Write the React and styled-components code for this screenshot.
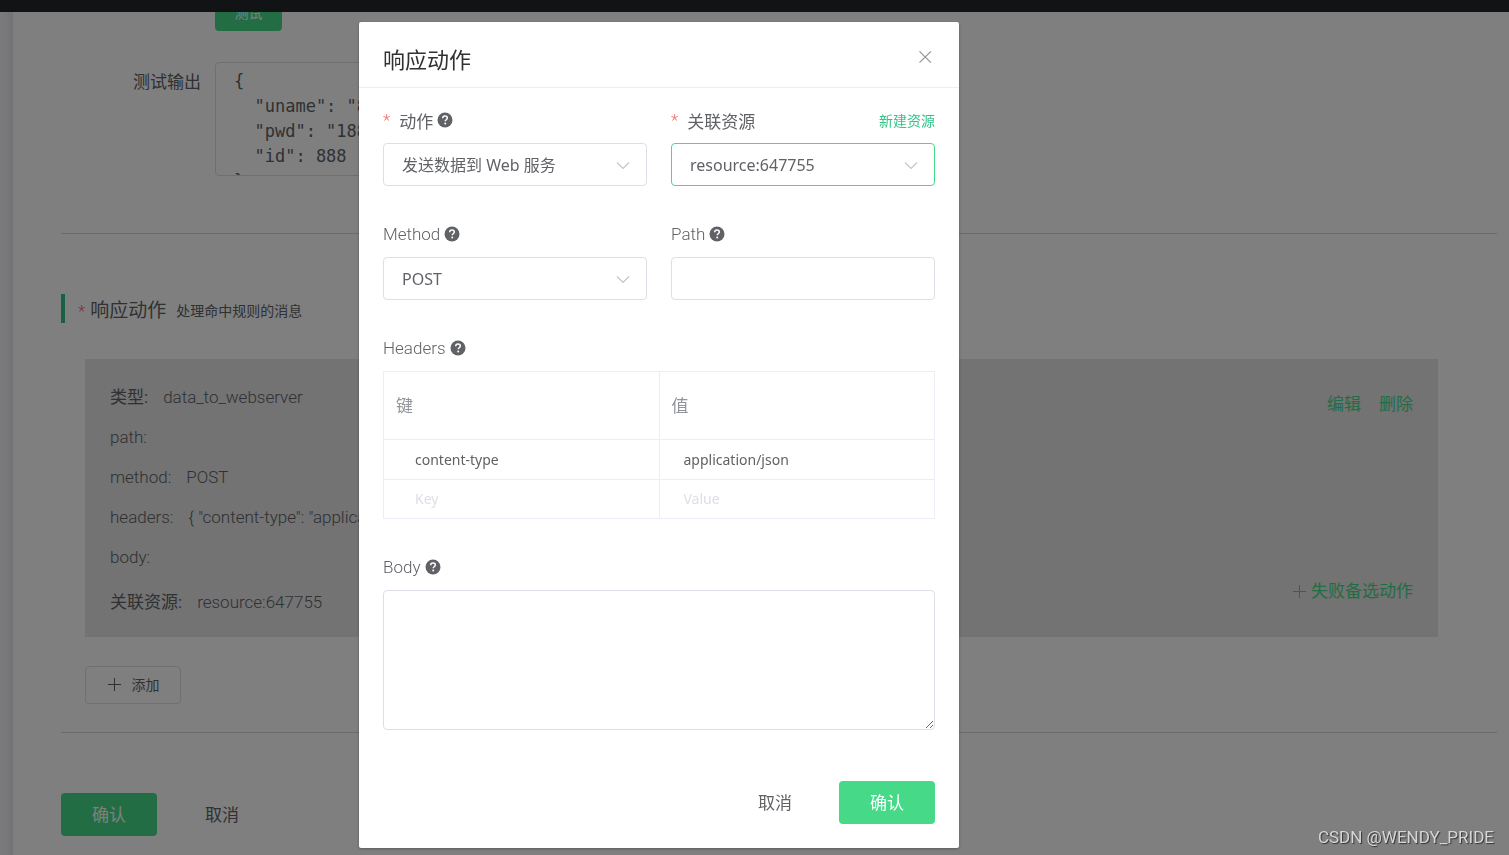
import React from "react";
import styled, { createGlobalStyle, css } from "styled-components";

const labelFont = `Roboto, "Noto Sans CJK SC", sans-serif`;
const controlFont = `"Noto Sans", "Noto Sans CJK SC", sans-serif`;

const GlobalStyle = createGlobalStyle`
  *, *::before, *::after { box-sizing: border-box; }
  body {
    margin: 0;
    background: #f4f4f8;
    color: #606266;
    font-family: ${labelFont};
    font-size: 17px;
    font-weight: 300;
    overflow: hidden;
  }
  button, input, select, textarea { font: inherit; color: inherit; }
`;

/* ---------- page behind the dialog ---------- */

const Page = styled.div`
  display: flex;
  flex-direction: column;
  height: 100vh;
`;

const TopBar = styled.header`
  flex: none;
  height: 12px;
  background: #242629;
`;

const Workspace = styled.div`
  flex: 1;
  min-height: 0;
  padding-left: 13px;
  overflow: hidden;
`;

const Content = styled.main`
  min-height: 100%;
  margin-top: -17px;
  padding: 0 12px 36px 48px;
  background: #fff;
  box-shadow: 0 0 12px rgba(0, 0, 0, 0.12);
`;

const OutputRow = styled.div`
  display: grid;
  grid-template-columns: 140px 1fr;
  column-gap: 14px;
  padding-top: 31px;
`;

const OutputLabel = styled.span`
  padding-top: 8px;
  line-height: 25px;
  text-align: right;
  font-weight: 400;
`;

const Output = styled.pre`
  height: 114px;
  max-width: 560px;
  margin: 0;
  padding: 6px 18px;
  overflow: hidden;
  border: 1px solid #dcdfe6;
  border-radius: 4px;
  font: 400 17px/25px "DejaVu Sans Mono", monospace;
`;

const Divider = styled.hr`
  height: 1px;
  margin: ${(p) => p.$margin};
  border: 0;
  background: #d4d6de;
`;

const SectionTitle = styled.h2`
  display: flex;
  align-items: center;
  gap: 10px;
  height: 29px;
  margin: 0 0 36px;
  padding-left: 13px;
  border-left: 4px solid #34c388;
  font-size: 19px;
  font-weight: 400;

  small { font-size: 14px; padding-top: 2px; }
`;

const Star = styled.span`
  color: #f56c6c;
  font-size: 17px;
  font-weight: 300;
  margin-right: ${(p) => p.$gap}px;
`;

const ActionCard = styled.section`
  display: flex;
  justify-content: space-between;
  margin: 0 59px 29px 24px;
  padding: 18px 25px 10px;
  background: #e6e6e6;
`;

const Facts = styled.dl`
  margin: 0;
`;

const Fact = styled.div`
  display: flex;
  align-items: baseline;
  gap: 15px;
  height: 40px;
  line-height: 40px;

  &:last-child { height: 50px; line-height: 50px; }
  dt { font-weight: ${(p) => (p.$cjk ? 400 : 300)}; }
  dd { margin: 0; white-space: nowrap; }
`;

const CardLinks = styled.div`
  display: flex;
  flex-direction: column;
  justify-content: space-between;
  align-items: flex-end;
  padding: 15px 0 23px;
`;

const LinkGroup = styled.div`
  display: flex;
  gap: 18px;
`;

const TextLink = styled.a`
  display: inline-flex;
  align-items: center;
  gap: 4px;
  color: ${(p) => (p.$small ? "#34c388" : "#46da88")};
  font-size: ${(p) => (p.$small ? 14 : 17)}px;
  font-weight: 400;
  line-height: 25px;
  text-decoration: none;
`;

const buttonKinds = {
  primary: css`
    min-width: 96px;
    height: 43px;
    background: #46da88;
    color: #fff;
  `,
  plain: css`
    height: 43px;
    background: none;
  `,
  outline: css`
    min-width: 96px;
    height: 38px;
    border: 1px solid #dcdfe6;
    background: #fff;
    font-size: 14px;
  `,
  small: css`
    min-width: 67px;
    height: 36px;
    background: #46da88;
    color: #fff;
    font-size: 14px;
  `,
};

const Button = styled.button`
  display: inline-flex;
  align-items: center;
  justify-content: center;
  gap: 10px;
  padding: 0 0 2px;
  border: 0;
  border-radius: 4px;
  font-weight: 400;
  cursor: pointer;
  ${(p) => buttonKinds[p.$kind]}
`;

const AddArea = styled.div`
  display: flex;
  padding-left: 24px;
`;

const TestArea = styled.div`
  display: flex;
  padding-left: 154px;
`;

const PageActions = styled.div`
  display: flex;
  gap: 48px;
`;

/* ---------- dialog ---------- */

const Overlay = styled.div`
  position: fixed;
  inset: 0;
  display: flex;
  justify-content: center;
  align-items: flex-start;
  padding: 22px 191px 0 0;
  overflow: hidden;
  background: rgba(0, 0, 0, 0.5);
`;

const Dialog = styled.section`
  width: 600px;
  border-radius: 2px;
  background: #fff;
  box-shadow: 0 1px 3px rgba(0, 0, 0, 0.3);
`;

const DialogHeader = styled.header`
  display: flex;
  justify-content: space-between;
  align-items: center;
  height: 66px;
  padding: 12px 24px 0;
  border-bottom: 1px solid #ebeef5;
`;

const DialogTitle = styled.h1`
  margin: 0;
  color: #303133;
  font-size: 22px;
  font-weight: 400;
  line-height: 32px;
`;

const CloseButton = styled.button`
  display: grid;
  place-items: center;
  width: 20px;
  height: 20px;
  margin-bottom: 8px;
  padding: 0;
  border: 0;
  background: none;
  color: #909399;
  cursor: pointer;
`;

const Form = styled.form`
  display: grid;
  grid-template-columns: 1fr 1fr;
  gap: 28px 24px;
  padding: 12px 24px 24px;
`;

const Field = styled.div`
  min-width: 0;
  grid-column: ${(p) => (p.$wide ? "1 / -1" : "auto")};
`;

const FieldHead = styled.div`
  display: flex;
  align-items: center;
  height: 43px;
  padding-bottom: 3px;
`;

const FieldLabel = styled.label`
  margin-right: 4px;
  font-weight: ${(p) => (p.$cjk ? 400 : 300)};
`;

const HeadLink = styled(TextLink)`
  margin-left: auto;
  padding-top: 2px;
`;

const box = css`
  display: block;
  width: 100%;
  border: 1px solid ${(p) => (p.$active ? "#46da88" : "#dcdfe6")};
  border-radius: 4px;
  outline: 0;
  background: #fff;
  font-family: ${controlFont};
  font-weight: 400;
`;

const SelectWrap = styled.div`
  position: relative;

  svg {
    position: absolute;
    top: 15px;
    right: 17px;
    pointer-events: none;
  }
`;

const Select = styled.select`
  ${box}
  height: 43px;
  padding: 0 40px 0 18px;
  appearance: none;
  font-size: 16px;
`;

const TextInput = styled.input`
  ${box}
  height: 43px;
  padding: 0 18px;
  font-size: 16px;
`;

const TextArea = styled.textarea`
  ${box}
  height: 140px;
  padding: 8px 18px;
  resize: vertical;
  font-size: 16px;
`;

const Table = styled.table`
  width: 100%;
  height: 148px;
  table-layout: fixed;
  border-collapse: collapse;

  th, td { border: 1px solid #ebeef5; }
  th {
    height: 68px;
    padding: 0 12px 3px;
    color: #909399;
    font-weight: 400;
    text-align: left;
  }
  td { padding: 0; }
  td:first-child { padding-left: 7px; }
`;

const CellInput = styled.input`
  display: block;
  width: 100%;
  height: 38px;
  padding: 0 24px;
  border: 0;
  outline: 0;
  background: none;
  font: 400 14px ${controlFont};

  &::placeholder { color: #dcdfe6; opacity: 1; }
`;

const DialogFooter = styled.footer`
  display: flex;
  grid-column: 1 / -1;
  justify-content: flex-end;
  gap: 47px;
  padding-top: 23px;
`;

const Watermark = styled.div`
  position: fixed;
  right: 15px;
  bottom: 6px;
  color: #d6d6d6;
  font: 400 17px/24px Roboto, sans-serif;
  text-shadow: 1px 1px 1px rgba(0, 0, 0, 0.6);
`;

/* ---------- icons ---------- */

const Plus = () => (
  <svg width="15" height="15" viewBox="0 0 15 15" fill="none" stroke="currentColor" aria-hidden="true">
    <path d="M7.5 1v13M1 7.5h13" />
  </svg>
);

const Chevron = () => (
  <svg width="14" height="14" viewBox="0 0 14 14" fill="none" stroke="#c0c4cc" strokeWidth="1.1" aria-hidden="true">
    <path d="M1 4.5l6 6 6-6" />
  </svg>
);

const Cross = () => (
  <svg width="14" height="14" viewBox="0 0 14 14" fill="none" stroke="currentColor" strokeWidth="1.2" aria-hidden="true">
    <path d="M1.5 1.3l11.4 11.4M12.9 1.3L1.5 12.7" />
  </svg>
);

const Help = () => (
  <svg width="16" height="16" viewBox="0 0 16 16" fill="none" aria-hidden="true">
    <circle cx="8" cy="8" r="7.5" fill="#606266" />
    <path
      d="M5.7 6.3C5.7 4.9 6.7 4.1 8 4.1s2.3.8 2.3 2c0 1.7-2.1 1.6-2.1 3.2"
      stroke="#fff"
      strokeWidth="1.5"
    />
    <circle cx="8.2" cy="11.5" r="1" fill="#fff" />
  </svg>
);

const facts = [
  ["类型:", "data_to_webserver", true],
  ["path:", ""],
  ["method:", "POST"],
  ["headers:", '{ "content-type": "application/json" }'],
  ["body:", ""],
  ["关联资源:", "resource:647755", true],
];

const output = `{
  "uname": "888",
  "pwd": "188",
  "id": 888
}`;

export default function App() {
  return (
    <>
      <GlobalStyle />
      <Page>
        <TopBar />
        <Workspace>
          <Content>
            <TestArea>
              <Button $kind="small" type="button">测试</Button>
            </TestArea>
            <OutputRow>
              <OutputLabel>测试输出</OutputLabel>
              <Output>{output}</Output>
            </OutputRow>
            <Divider $margin="57px 0 60px" />
            <SectionTitle>
              <span><Star $gap={5}>*</Star>响应动作</span>
              <small>处理命中规则的消息</small>
            </SectionTitle>
            <ActionCard>
              <Facts>
                {facts.map(([name, value, cjk]) => (
                  <Fact key={name} $cjk={cjk}>
                    <dt>{name}</dt>
                    <dd>{value}</dd>
                  </Fact>
                ))}
              </Facts>
              <CardLinks>
                <LinkGroup>
                  <TextLink href="#edit">编辑</TextLink>
                  <TextLink href="#delete">删除</TextLink>
                </LinkGroup>
                <TextLink href="#fallback"><Plus />失败备选动作</TextLink>
              </CardLinks>
            </ActionCard>
            <AddArea>
              <Button $kind="outline" type="button"><Plus />添加</Button>
            </AddArea>
            <Divider $margin="28px 0 60px" />
            <PageActions>
              <Button $kind="primary" type="button">确认</Button>
              <Button $kind="plain" type="button">取消</Button>
            </PageActions>
          </Content>
        </Workspace>
      </Page>

      <Overlay>
        <Dialog role="dialog" aria-modal="true" aria-labelledby="dialog-title">
          <DialogHeader>
            <DialogTitle id="dialog-title">响应动作</DialogTitle>
            <CloseButton type="button" aria-label="Close"><Cross /></CloseButton>
          </DialogHeader>
          <Form onSubmit={(e) => e.preventDefault()}>
            <Field>
              <FieldHead>
                <Star $gap={9}>*</Star>
                <FieldLabel $cjk htmlFor="action">动作</FieldLabel>
                <Help />
              </FieldHead>
              <SelectWrap>
                <Select id="action"><option>发送数据到 Web 服务</option></Select>
                <Chevron />
              </SelectWrap>
            </Field>
            <Field>
              <FieldHead>
                <Star $gap={9}>*</Star>
                <FieldLabel $cjk htmlFor="resource">关联资源</FieldLabel>
                <HeadLink $small href="#new-resource">新建资源</HeadLink>
              </FieldHead>
              <SelectWrap>
                <Select id="resource" $active><option>resource:647755</option></Select>
                <Chevron />
              </SelectWrap>
            </Field>
            <Field>
              <FieldHead>
                <FieldLabel htmlFor="method">Method</FieldLabel>
                <Help />
              </FieldHead>
              <SelectWrap>
                <Select id="method"><option>POST</option></Select>
                <Chevron />
              </SelectWrap>
            </Field>
            <Field>
              <FieldHead>
                <FieldLabel htmlFor="path">Path</FieldLabel>
                <Help />
              </FieldHead>
              <TextInput id="path" type="text" />
            </Field>
            <Field $wide>
              <FieldHead>
                <FieldLabel as="span" id="headers-label">Headers</FieldLabel>
                <Help />
              </FieldHead>
              <Table aria-labelledby="headers-label">
                <thead>
                  <tr><th scope="col">键</th><th scope="col">值</th></tr>
                </thead>
                <tbody>
                  <tr>
                    <td><CellInput aria-label="键 1" defaultValue="content-type" /></td>
                    <td><CellInput aria-label="值 1" defaultValue="application/json" /></td>
                  </tr>
                  <tr>
                    <td><CellInput aria-label="键 2" placeholder="Key" /></td>
                    <td><CellInput aria-label="值 2" placeholder="Value" /></td>
                  </tr>
                </tbody>
              </Table>
            </Field>
            <Field $wide>
              <FieldHead>
                <FieldLabel htmlFor="body">Body</FieldLabel>
                <Help />
              </FieldHead>
              <TextArea id="body" />
            </Field>
            <DialogFooter>
              <Button $kind="plain" type="button">取消</Button>
              <Button $kind="primary" type="submit">确认</Button>
            </DialogFooter>
          </Form>
        </Dialog>
      </Overlay>
      <Watermark>CSDN @WENDY_PRIDE</Watermark>
    </>
  );
}
